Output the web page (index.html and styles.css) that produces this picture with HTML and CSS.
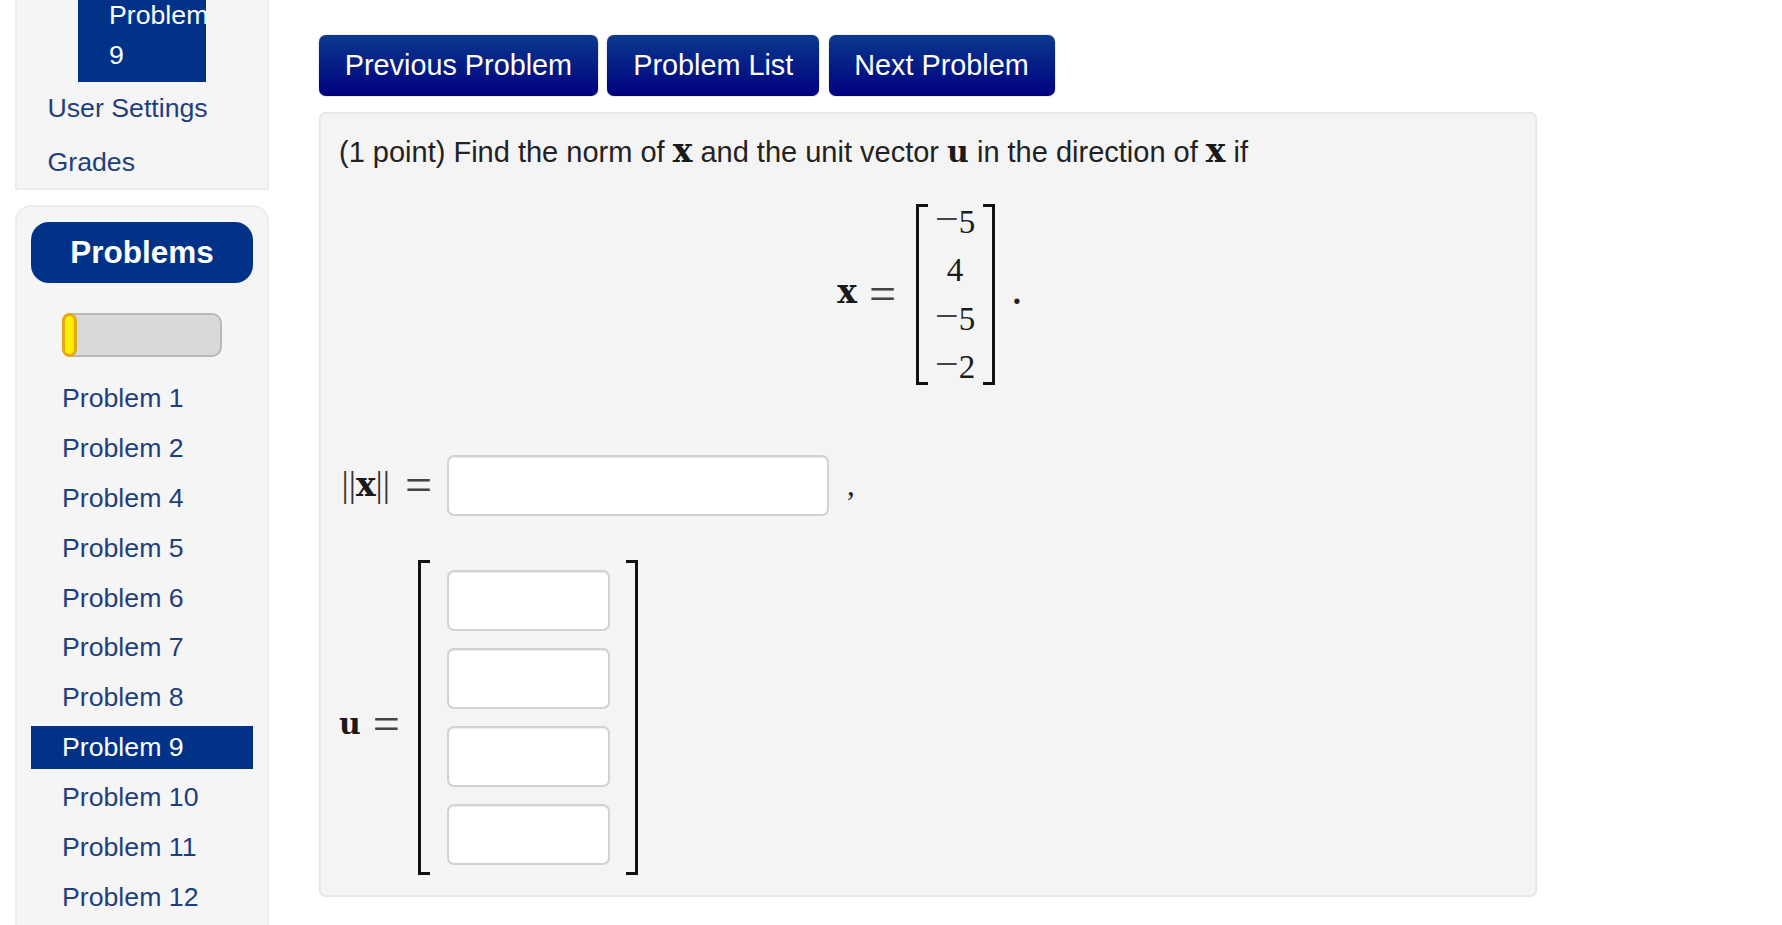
FILE: index.html
```html
<!DOCTYPE html>
<html lang="en">
<head>
  <meta charset="UTF-8">
  <meta name="viewport" content="width=device-width, initial-scale=1.0">
  <title>Problem 9</title>
  <link rel="stylesheet" href="styles.css">
</head>
<body>
  <div class="page">
    <div class="sidebar">
      <div class="panel nav-panel">
        <div class="sub-nav">
          <a href="#" class="sub-link">Problem 9</a>
        </div>
        <a href="#" class="nav-link">User Settings</a>
        <a href="#" class="nav-link">Grades</a>
      </div>

      <div class="panel problems-panel">
        <div class="problems-title">Problems</div>
        <div class="progress">
          <div class="progress-fill"></div>
        </div>
        <div class="problem-list">
          <a href="#" class="problem-link">Problem 1</a>
          <a href="#" class="problem-link">Problem 2</a>
          <a href="#" class="problem-link">Problem 4</a>
          <a href="#" class="problem-link">Problem 5</a>
          <a href="#" class="problem-link">Problem 6</a>
          <a href="#" class="problem-link">Problem 7</a>
          <a href="#" class="problem-link">Problem 8</a>
          <a href="#" class="problem-link active">Problem 9</a>
          <a href="#" class="problem-link">Problem 10</a>
          <a href="#" class="problem-link">Problem 11</a>
          <a href="#" class="problem-link">Problem 12</a>
        </div>
      </div>
    </div>

    <div class="main">
      <div class="buttons">
        <a href="#" class="btn">Previous Problem</a>
        <a href="#" class="btn">Problem List</a>
        <a href="#" class="btn">Next Problem</a>
      </div>

      <div class="problem">
        <p class="statement">(1 point) Find the norm of <b class="vec">x</b> and the unit vector <b class="vec u">u</b> in the direction of <b class="vec">x</b> if</p>

        <div class="display">
          <b class="vec label">x</b>
          <span class="equals">=</span>
          <div class="matrix">
            <span class="bracket left"></span>
            <div class="entries">
              <span><i class="minus">&minus;</i>5</span>
              <span>4</span>
              <span><i class="minus">&minus;</i>5</span>
              <span><i class="minus">&minus;</i>2</span>
            </div>
            <span class="bracket right"></span>
          </div>
          <span class="period">.</span>
        </div>

        <div class="answer-row norm-row">
          <span class="norm"><span class="bars">||</span><b class="vec">x</b><span class="bars">||</span></span>
          <span class="equals">=</span>
          <input type="text" class="answer wide">
          <span class="comma">,</span>
        </div>

        <div class="answer-row unit-row">
          <b class="vec u label">u</b>
          <span class="equals">=</span>
          <div class="matrix">
            <span class="bracket left"></span>
            <div class="input-stack">
              <input type="text" class="answer">
              <input type="text" class="answer">
              <input type="text" class="answer">
              <input type="text" class="answer">
            </div>
            <span class="bracket right"></span>
          </div>
        </div>
      </div>
    </div>
  </div>
</body>
</html>
```

FILE: styles.css
```css
html, body {
  margin: 0;
  padding: 0;
  height: 925px;
  overflow: hidden;
  background-color: #fff;
  font-family: "Liberation Sans", Arial, sans-serif;
  color: #222;
}

a {
  text-decoration: none;
}

.page {
  display: flex;
  align-items: flex-start;
  padding-left: 15px;
  height: 925px;
  overflow: hidden;
}

/* Sidebar */
.sidebar {
  width: 254px;
  flex-shrink: 0;
}

.panel {
  background-color: #f5f5f5;
  border: 2px solid #ececec;
  box-sizing: border-box;
}

.nav-panel {
  border-top: none;
  padding-bottom: 4px;
}

.sub-nav {
  margin-left: 61px;
  width: 128px;
  margin-top: -5px;
  margin-bottom: 5px;
  background-color: #003388;
  overflow: hidden;
}

.sub-link {
  display: block;
  width: 80px;
  padding: 0 17px 7px 31px;
  font-size: 26.7px;
  line-height: 40px;
  color: #fff;
}

.nav-link {
  display: block;
  padding-left: 30.5px;
  font-size: 26.7px;
  line-height: 43px;
  color: #1f3f7a;
  margin-bottom: 11px;
}

.nav-link:last-child {
  margin-bottom: 0;
}

.problems-panel {
  margin-top: 15px;
  padding: 15px 14px 0;
  border-bottom: none;
  border-radius: 16px 16px 0 0;
  height: 721px;
  overflow: hidden;
}

.problems-title {
  height: 61px;
  line-height: 61px;
  border-radius: 18px;
  background-color: #003388;
  color: #fff;
  font-size: 31.5px;
  font-weight: bold;
  text-align: center;
}

.progress {
  width: 160px;
  height: 44px;
  margin: 30px auto 20px;
  box-sizing: border-box;
  background-color: #d9d9d9;
  border: 2px solid #b8b8b8;
  border-radius: 10px;
}

.progress-fill {
  width: 15px;
  height: 44px;
  margin: -2px 0 0 -2px;
  box-sizing: border-box;
  background-color: #ffee00;
  border: 3px solid #e6a817;
  border-radius: 8px;
}

.problem-list {
  display: flex;
  flex-direction: column;
  gap: 6.9px;
}

.problem-link {
  display: block;
  padding-left: 31px;
  height: 43px;
  font-size: 26.7px;
  line-height: 43px;
  color: #1f3f7a;
}

.problem-link.active {
  background-color: #003388;
  color: #fff;
}

/* Main column */
.main {
  width: 1218px;
  margin-left: 50px;
  padding-top: 35px;
}

.buttons {
  display: flex;
  gap: 9.5px;
  margin-bottom: 16px;
}

.btn {
  display: block;
  height: 61px;
  line-height: 61px;
  padding: 0 25.8px;
  font-size: 28.8px;
  color: #fff;
  border-radius: 7px;
  box-sizing: border-box;
  background: linear-gradient(to bottom, #0a3a8c, #000080);
  box-shadow: 0 0 1px #335;
}

.problem {
  box-sizing: border-box;
  background-color: #f4f4f4;
  border: 2px solid #e8e8e8;
  border-radius: 6px;
  padding: 18px 18px 20px;
  font-size: 29px;
}

.statement {
  margin: 0;
  line-height: 40px;
}

.vec {
  font-family: "DejaVu Serif", serif;
  font-weight: bold;
  font-size: 33px;
  line-height: 1;
  color: #1a1a1a;
}

.vec.u {
  font-size: 30px;
}

/* Math */
.display {
  display: flex;
  justify-content: center;
  align-items: center;
  margin-top: 32px;
  padding-left: 2.3px;
  font-family: "Liberation Serif", serif;
}

.label {
  line-height: 34px;
  margin-bottom: 4px;
}

.equals {
  font-family: "Liberation Serif", serif;
  font-size: 48px;
  line-height: 34px;
  color: #444;
  margin: 0 20px 0 12px;
}

.matrix {
  display: flex;
  align-items: stretch;
}

.bracket {
  width: 12px;
  box-sizing: border-box;
  border-top: 3px solid #111;
  border-bottom: 3px solid #111;
}

.bracket.left {
  border-left: 3px solid #111;
}

.bracket.right {
  border-right: 3px solid #111;
}

.entries {
  display: flex;
  flex-direction: column;
  gap: 14.3px;
  width: 42px;
  padding: 1px 7px 1px 6px;
  align-items: center;
  font-size: 33px;
  line-height: 34px;
  color: #1a1a1a;
}

.minus {
  font-style: normal;
  font-size: 42px;
  line-height: 0;
  color: #444;
}

.period {
  font-size: 33px;
  font-weight: bold;
  line-height: 34px;
  margin: 0 0 3px 17.7px;
}

.answer-row {
  display: flex;
  align-items: center;
  margin-top: 70px;
  font-family: "Liberation Serif", serif;
}

.norm {
  display: inline-block;
  margin-left: 2.5px;
  line-height: 34px;
}

.bars {
  font-size: 36px;
  color: #333;
}

.norm-row .equals {
  margin: 0 15px;
}

.answer {
  display: block;
  width: 163px;
  height: 61px;
  padding: 0;
  box-sizing: border-box;
  background-color: #fff;
  border: 2px solid #d2d2d2;
  border-radius: 7px;
  box-shadow: inset 0 1px 1px rgba(0, 0, 0, 0.08);
}

.answer.wide {
  width: 382px;
}

.comma {
  font-size: 31px;
  margin: 0 0 1px 18px;
}

.unit-row {
  margin-top: 44px;
}

.unit-row .label {
  margin: 14px 0 0;
}

.unit-row .equals {
  margin: 14px 18px 0 12px;
}

.input-stack {
  display: flex;
  flex-direction: column;
  gap: 17px;
  padding: 10px 16px 10px 17px;
}
```
